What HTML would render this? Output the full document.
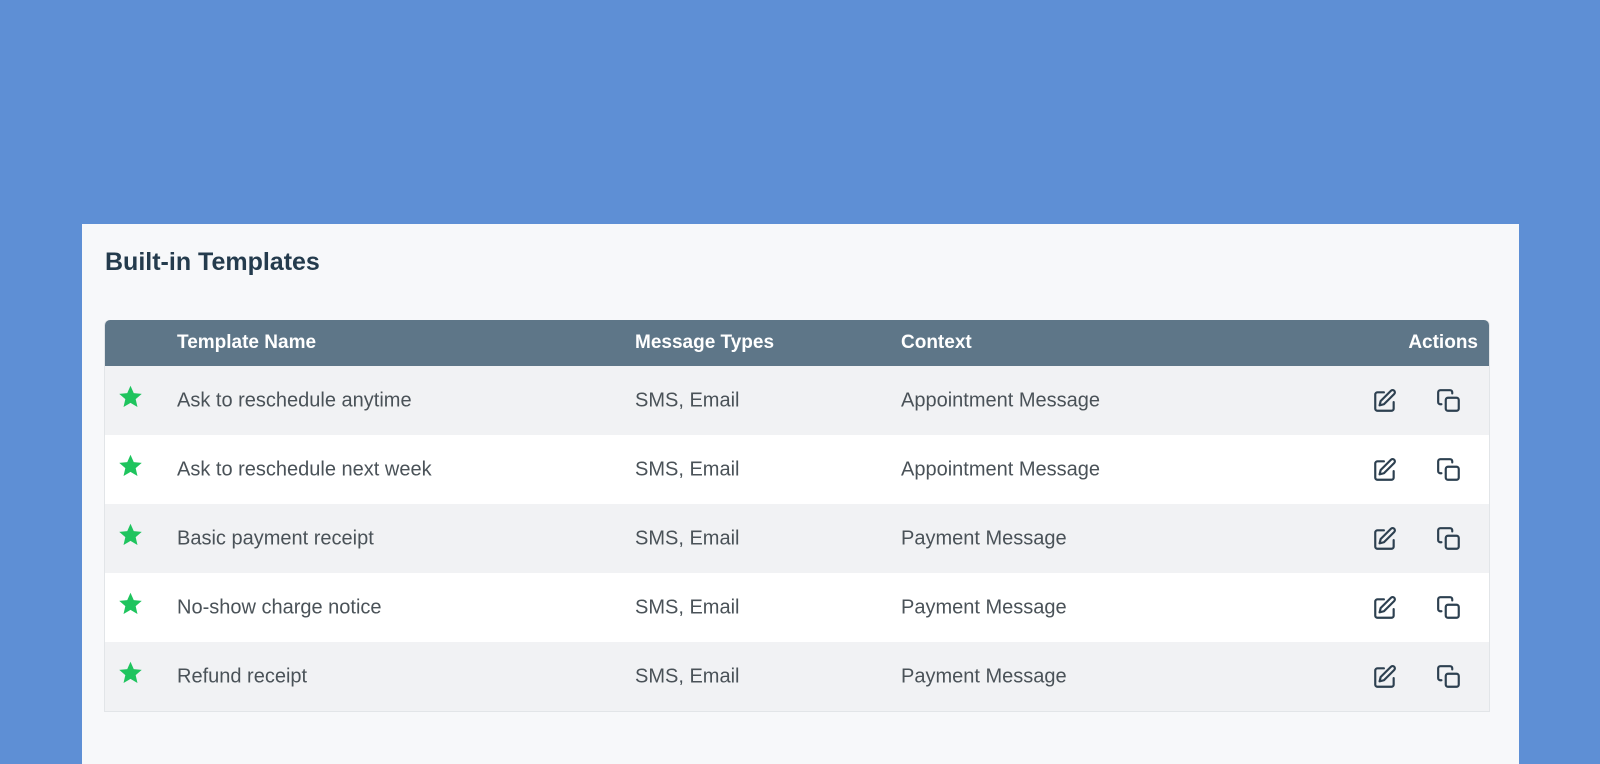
<!DOCTYPE html>
<html><head><style>
body{margin:0;width:1600px;height:751px;background:#5e8fd5;font-family:"Liberation Sans",sans-serif;overflow:hidden;position:relative}
.card{position:absolute;left:82px;top:224px;width:1437px;height:540px;background:#f7f8fa}
h1{position:absolute;left:23px;top:24px;margin:0;font-size:25px;font-weight:bold;color:#243b4d}
.tbl{position:absolute;left:22px;top:96px;width:1384px;border:1px solid #e2e5e8;border-top:none;border-radius:5px 5px 0 0}
.hd{height:46px;background:#5e7688;border-radius:5px 5px 0 0;position:relative;color:#fff;font-weight:bold;font-size:19px}
.hd span,.r span{position:absolute;top:50%;transform:translateY(-50%);white-space:nowrap}
.r{height:69px;position:relative;color:#4a5258;font-size:20px}
.g{background:#f1f2f4}.w{background:#fff}
.c1{left:72px}.c2{left:530px}.c3{left:796px}
svg{position:absolute;top:50%;transform:translateY(-50%)}
</style></head><body>
<div class="card"><h1>Built-in Templates</h1>
<div class="tbl">
<div class="hd"><span class="c1">Template Name</span><span class="c2">Message Types</span><span class="c3">Context</span><span style="right:11px">Actions</span></div>

<div class="r g"><svg style="left:12px;margin-top:-4px" width="27" height="27" viewBox="0 0 24 24"><path fill="#1fc45e" d="M12 2l2.9 6.6 7.1.6-5.4 4.7 1.6 7-6.2-3.7-6.2 3.7 1.6-7L2 9.2l7.1-.6z"/></svg><span class="c1">Ask to reschedule anytime</span><span class="c2">SMS, Email</span><span class="c3">Appointment Message</span>
<svg style="left:1267px" width="26" height="26" viewBox="0 0 24 24" fill="none" stroke="#2d4050" stroke-width="2" stroke-linecap="round" stroke-linejoin="round"><path d="M11 4H5a2 2 0 0 0-2 2v13a2 2 0 0 0 2 2h13a2 2 0 0 0 2-2v-6"/><path d="M17.5 2.5a2.1 2.1 0 0 1 3 3L11 15l-4 1 1-4z"/></svg>
<svg style="left:1331px" width="26" height="26" viewBox="0 0 24 24" fill="none" stroke="#2d4050" stroke-width="2" stroke-linecap="round" stroke-linejoin="round"><rect x="9" y="9" width="12" height="12" rx="2"/><path d="M5 15H4a2 2 0 0 1-2-2V4a2 2 0 0 1 2-2h9a2 2 0 0 1 2 2v1"/></svg></div>

<div class="r w"><svg style="left:12px;margin-top:-4px" width="27" height="27" viewBox="0 0 24 24"><path fill="#1fc45e" d="M12 2l2.9 6.6 7.1.6-5.4 4.7 1.6 7-6.2-3.7-6.2 3.7 1.6-7L2 9.2l7.1-.6z"/></svg><span class="c1">Ask to reschedule next week</span><span class="c2">SMS, Email</span><span class="c3">Appointment Message</span>
<svg style="left:1267px" width="26" height="26" viewBox="0 0 24 24" fill="none" stroke="#2d4050" stroke-width="2" stroke-linecap="round" stroke-linejoin="round"><path d="M11 4H5a2 2 0 0 0-2 2v13a2 2 0 0 0 2 2h13a2 2 0 0 0 2-2v-6"/><path d="M17.5 2.5a2.1 2.1 0 0 1 3 3L11 15l-4 1 1-4z"/></svg>
<svg style="left:1331px" width="26" height="26" viewBox="0 0 24 24" fill="none" stroke="#2d4050" stroke-width="2" stroke-linecap="round" stroke-linejoin="round"><rect x="9" y="9" width="12" height="12" rx="2"/><path d="M5 15H4a2 2 0 0 1-2-2V4a2 2 0 0 1 2-2h9a2 2 0 0 1 2 2v1"/></svg></div>

<div class="r g"><svg style="left:12px;margin-top:-4px" width="27" height="27" viewBox="0 0 24 24"><path fill="#1fc45e" d="M12 2l2.9 6.6 7.1.6-5.4 4.7 1.6 7-6.2-3.7-6.2 3.7 1.6-7L2 9.2l7.1-.6z"/></svg><span class="c1">Basic payment receipt</span><span class="c2">SMS, Email</span><span class="c3">Payment Message</span>
<svg style="left:1267px" width="26" height="26" viewBox="0 0 24 24" fill="none" stroke="#2d4050" stroke-width="2" stroke-linecap="round" stroke-linejoin="round"><path d="M11 4H5a2 2 0 0 0-2 2v13a2 2 0 0 0 2 2h13a2 2 0 0 0 2-2v-6"/><path d="M17.5 2.5a2.1 2.1 0 0 1 3 3L11 15l-4 1 1-4z"/></svg>
<svg style="left:1331px" width="26" height="26" viewBox="0 0 24 24" fill="none" stroke="#2d4050" stroke-width="2" stroke-linecap="round" stroke-linejoin="round"><rect x="9" y="9" width="12" height="12" rx="2"/><path d="M5 15H4a2 2 0 0 1-2-2V4a2 2 0 0 1 2-2h9a2 2 0 0 1 2 2v1"/></svg></div>

<div class="r w"><svg style="left:12px;margin-top:-4px" width="27" height="27" viewBox="0 0 24 24"><path fill="#1fc45e" d="M12 2l2.9 6.6 7.1.6-5.4 4.7 1.6 7-6.2-3.7-6.2 3.7 1.6-7L2 9.2l7.1-.6z"/></svg><span class="c1">No-show charge notice</span><span class="c2">SMS, Email</span><span class="c3">Payment Message</span>
<svg style="left:1267px" width="26" height="26" viewBox="0 0 24 24" fill="none" stroke="#2d4050" stroke-width="2" stroke-linecap="round" stroke-linejoin="round"><path d="M11 4H5a2 2 0 0 0-2 2v13a2 2 0 0 0 2 2h13a2 2 0 0 0 2-2v-6"/><path d="M17.5 2.5a2.1 2.1 0 0 1 3 3L11 15l-4 1 1-4z"/></svg>
<svg style="left:1331px" width="26" height="26" viewBox="0 0 24 24" fill="none" stroke="#2d4050" stroke-width="2" stroke-linecap="round" stroke-linejoin="round"><rect x="9" y="9" width="12" height="12" rx="2"/><path d="M5 15H4a2 2 0 0 1-2-2V4a2 2 0 0 1 2-2h9a2 2 0 0 1 2 2v1"/></svg></div>

<div class="r g"><svg style="left:12px;margin-top:-4px" width="27" height="27" viewBox="0 0 24 24"><path fill="#1fc45e" d="M12 2l2.9 6.6 7.1.6-5.4 4.7 1.6 7-6.2-3.7-6.2 3.7 1.6-7L2 9.2l7.1-.6z"/></svg><span class="c1">Refund receipt</span><span class="c2">SMS, Email</span><span class="c3">Payment Message</span>
<svg style="left:1267px" width="26" height="26" viewBox="0 0 24 24" fill="none" stroke="#2d4050" stroke-width="2" stroke-linecap="round" stroke-linejoin="round"><path d="M11 4H5a2 2 0 0 0-2 2v13a2 2 0 0 0 2 2h13a2 2 0 0 0 2-2v-6"/><path d="M17.5 2.5a2.1 2.1 0 0 1 3 3L11 15l-4 1 1-4z"/></svg>
<svg style="left:1331px" width="26" height="26" viewBox="0 0 24 24" fill="none" stroke="#2d4050" stroke-width="2" stroke-linecap="round" stroke-linejoin="round"><rect x="9" y="9" width="12" height="12" rx="2"/><path d="M5 15H4a2 2 0 0 1-2-2V4a2 2 0 0 1 2-2h9a2 2 0 0 1 2 2v1"/></svg></div>

</div></div>
</body></html>
